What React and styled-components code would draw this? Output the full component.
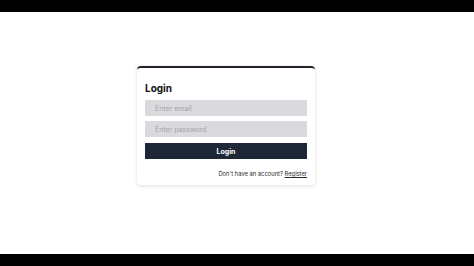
import styled, { createGlobalStyle } from "styled-components";

const Global = createGlobalStyle`
  html, body { margin: 0; padding: 0; background: #000; }
  body { font-family: Inter, "Liberation Sans", Arial, sans-serif; }
`;

const Page = styled.div`
  width: 474px;
  height: 266px;
  display: flex;
  flex-direction: column;
  background: #000;
`;

const Bar = styled.div`
  height: ${(p) => p.h}px;
  background: #000;
  flex-shrink: 0;
`;

const Stage = styled.main`
  flex: 1;
  background: #fff;
  padding: 54px 0 0 137px;
  box-sizing: border-box;
`;

const Card = styled.form`
  width: 178px;
  box-sizing: border-box;
  border-top: 2px solid #1f242c;
  border-radius: 4px;
  background: #fff;
  box-shadow: 0 1px 4px rgba(0, 0, 0, 0.12), 0 0 1px rgba(0, 0, 0, 0.08);
  padding: 14px 8px 7px;
  display: flex;
  flex-direction: column;
`;

const Title = styled.h2`
  margin: 0 0 5px;
  font-size: 10px;
  line-height: 13px;
  font-weight: 700;
  color: #111;
`;

const Input = styled.input`
  height: 16px;
  border: none;
  outline: none;
  background: #dadade;
  padding: 0 10px;
  font-family: inherit;
  font-size: 7px;
  color: #333;
  margin-bottom: 5px;
  box-sizing: border-box;
  &::placeholder { color: #a3a3ab; }
`;

const Button = styled.button`
  height: 16px;
  border: none;
  background: #1e2738;
  color: #fff;
  font-family: inherit;
  font-size: 7px;
  font-weight: 700;
  padding: 0;
  margin-top: 1px;
`;

const Footer = styled.p`
  margin: 10px 0 0;
  text-align: right;
  font-size: 5.8px;
  line-height: 9px;
  color: #2a2a2a;
`;

const Link = styled.a`
  color: #2a2a2a;
  text-decoration: underline;
`;

export default function App() {
  return (
    <>
      <Global />
      <Page>
        <Bar h={12} />
        <Stage>
          <Card onSubmit={(e) => e.preventDefault()}>
            <Title>Login</Title>
            <Input type="email" placeholder="Enter email" />
            <Input type="password" placeholder="Enter password" />
            <Button type="submit">Login</Button>
            <Footer>
              Don't have an account? <Link href="#">Register</Link>
            </Footer>
          </Card>
        </Stage>
        <Bar h={12} />
      </Page>
    </>
  );
}
